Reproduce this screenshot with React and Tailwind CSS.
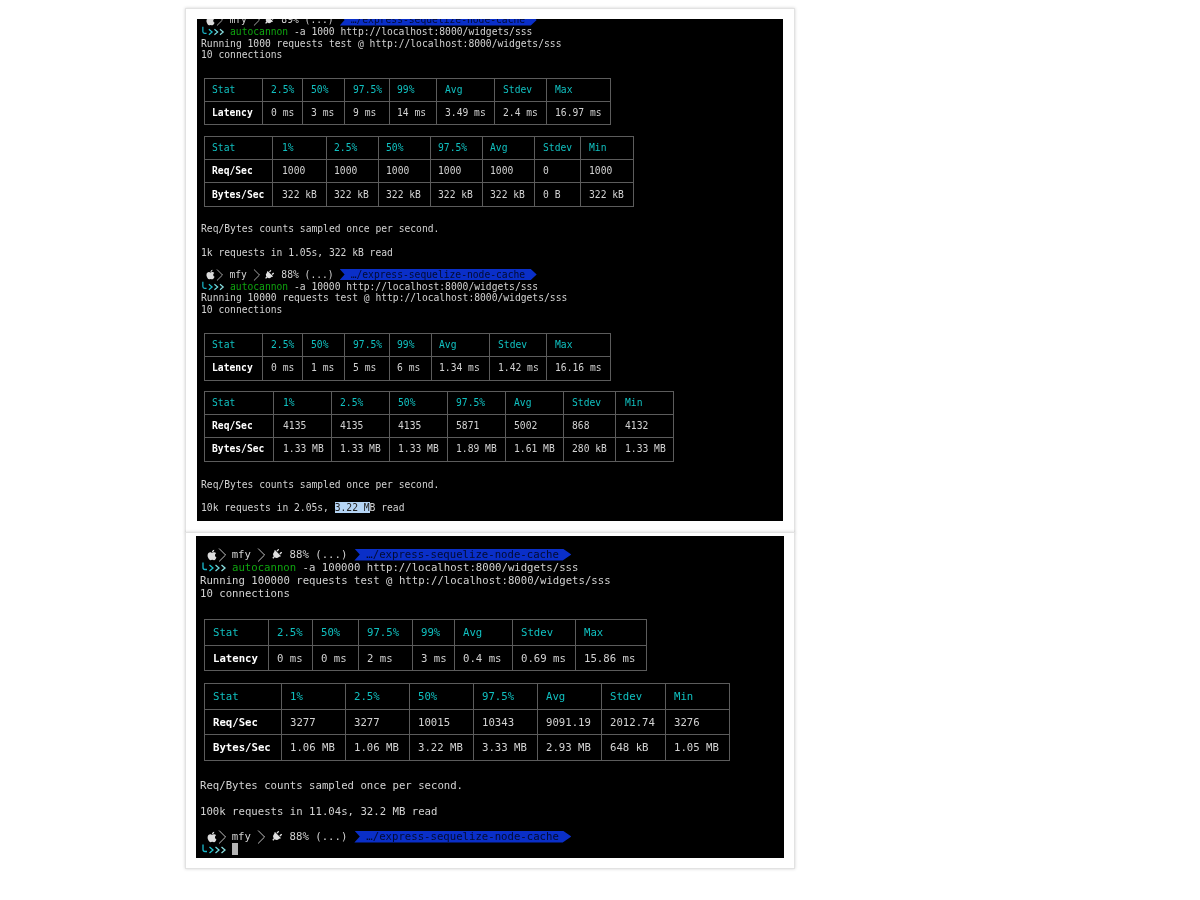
import React from "react";
import { FaApple, FaPlug } from "react-icons/fa";

const Chevron = ({ h }) => (
    <svg width={h * 0.62} height={h} viewBox="0 0 8 13" fill="none" stroke="#c8c8c8" strokeWidth="0.9" className="shrink-0">
        <path d="M1 0.5 L7 6.5 L1 12.5" />
    </svg>
);

const Arrows = ({ big }) => (
    <svg width={big ? 27 : 25} height="11" viewBox="0 0 27 11" fill="none" strokeWidth="1.3" className={big ? "ml-[5px] shrink-0" : "ml-[4px] shrink-0"}>
        <path d="M2 0.5 V5.5 Q2 7.5 4 7.5 H6" stroke="#19b8cc" />
        <path d="M8.5 3 L12 6 L8.5 9" stroke="#1fc4cf" />
        <path d="M14.5 3 L18 6 L14.5 9" stroke="#6fd6dc" />
        <path d="M20.5 3 L24 6 L20.5 9" stroke="#8adfe0" />
    </svg>
);

const Prompt = ({ big, battery }) => {
    const h = big ? 14 : 12;
    return (
        <div className={big ? "flex items-center h-[13px] pl-[10px]" : "flex items-center h-[12px] pl-[8px]"}>
            <FaApple className={big ? "text-[12px] text-[#dcdcdc] shrink-0" : "text-[11px] text-[#dcdcdc] shrink-0"} />
            <span className="ml-0"><Chevron h={h} /></span>
            <span className={big ? "ml-[5px]" : "ml-[6px]"}>mfy</span>
            <span className="ml-[6px]"><Chevron h={h} /></span>
            <FaPlug className={big ? "ml-[5px] text-[11px] text-[#e0e0e0] rotate-45 shrink-0" : "ml-[4px] text-[10px] text-[#e0e0e0] rotate-45 shrink-0"} />
            <span className={big ? "ml-[8px] whitespace-pre" : "ml-[7px] whitespace-pre"}>{battery}% (...)</span>
            <span
                className={
                    big
                        ? "ml-[7px] h-[12px] w-[217px] pl-[12px] flex items-center bg-[#0a2fc8] text-[#030b30] [clip-path:polygon(0_0,96%_0,100%_50%,96%_100%,0_100%,2.5%_50%)]"
                        : "ml-[6px] h-[11px] w-[197px] pl-[11px] flex items-center bg-[#0a2fc8] text-[#030b30] [clip-path:polygon(0_0,97%_0,100%_50%,97%_100%,0_100%,2.5%_50%)]"
                }
            >
                …/express-sequelize-node-cache
            </span>
        </div>
    );
};

const Command = ({ big, children }) => (
    <div className="flex items-center">
        <Arrows big={big} />
        <span className="ml-[4px] whitespace-pre text-[#0fa50f]">autocannon</span>
        <span className="whitespace-pre"> {children}</span>
    </div>
);

const Table = ({ widths, rows, rowH, pads, className }) => (
    <div className={"w-fit border-t border-l border-[#5c5c5c] " + className}>
        {rows.map((row, r) => (
            <div key={r} className="flex">
                {row.map((cell, c) => (
                    <div
                        key={c}
                        style={{ width: widths[c], height: rowH[r], paddingLeft: pads[c] }}
                        className={
                            "flex items-center whitespace-pre border-r border-b border-[#5c5c5c] " +
                            (r === 0 ? "text-[#10c0c0]" : c === 0 ? "font-bold text-white" : "")
                        }
                    >
                        {cell}
                    </div>
                ))}
            </div>
        ))}
    </div>
);

const App = () => {
    return (
        <div className="min-h-[900px] bg-white pt-2 font-['DejaVu_Sans_Mono',monospace]">
            <div className="ml-[185px] w-[610px] border border-[#e2e2e2] bg-white shadow-[0_0_3px_rgba(0,0,0,0.18)] pt-[10px] pl-[11px] pr-[11px] pb-[11px]">
                <div className="h-[502px] w-[586px] overflow-hidden bg-black text-[9.67px] leading-[11.72px] text-[#d2d2d2] blur-[0.3px]">
                    <div className="-mt-[5px]">
                        <Prompt battery={89} />
                    </div>
                    <Command>-a 1000 http://localhost:8000/widgets/sss</Command>
                    <div className="pl-[4px]">Running 1000 requests test @ http://localhost:8000/widgets/sss</div>
                    <div className="pl-[4px]">10 connections</div>
                    <Table
                        className="ml-[7px] mt-[17px]"
                        pads={[7, 8, 8, 8, 7, 8, 8, 8]}
                        widths={[58, 40, 42, 45, 47, 58, 52, 64]}
                        rowH={[23, 23]}
                        rows={[
                            ["Stat", "2.5%", "50%", "97.5%", "99%", "Avg", "Stdev", "Max"],
                            ["Latency", "0 ms", "3 ms", "9 ms", "14 ms", "3.49 ms", "2.4 ms", "16.97 ms"],
                        ]}
                    />
                    <Table
                        className="ml-[7px] mt-[11px]"
                        pads={[7, 9, 7, 7, 7, 7, 8, 8]}
                        widths={[68, 54, 52, 52, 52, 52, 46, 53]}
                        rowH={[23, 23, 24]}
                        rows={[
                            ["Stat", "1%", "2.5%", "50%", "97.5%", "Avg", "Stdev", "Min"],
                            ["Req/Sec", "1000", "1000", "1000", "1000", "1000", "0", "1000"],
                            ["Bytes/Sec", "322 kB", "322 kB", "322 kB", "322 kB", "322 kB", "0 B", "322 kB"],
                        ]}
                    />
                    <div className="pl-[4px] mt-[16px]">Req/Bytes counts sampled once per second.</div>
                    <div className="pl-[4px] mt-[12px]">1k requests in 1.05s, 322 kB read</div>
                    <div className="mt-[10px]">
                        <Prompt battery={88} />
                    </div>
                    <Command>-a 10000 http://localhost:8000/widgets/sss</Command>
                    <div className="pl-[4px]">Running 10000 requests test @ http://localhost:8000/widgets/sss</div>
                    <div className="pl-[4px]">10 connections</div>
                    <Table
                        className="ml-[7px] mt-[17px]"
                        pads={[7, 8, 8, 8, 7, 7, 8, 8]}
                        widths={[58, 40, 42, 45, 42, 58, 57, 64]}
                        rowH={[23, 24]}
                        rows={[
                            ["Stat", "2.5%", "50%", "97.5%", "99%", "Avg", "Stdev", "Max"],
                            ["Latency", "0 ms", "1 ms", "5 ms", "6 ms", "1.34 ms", "1.42 ms", "16.16 ms"],
                        ]}
                    />
                    <Table
                        className="ml-[7px] mt-[10px]"
                        pads={[7, 9, 8, 8, 8, 8, 8, 9]}
                        widths={[69, 58, 58, 58, 58, 58, 52, 58]}
                        rowH={[23, 23, 24]}
                        rows={[
                            ["Stat", "1%", "2.5%", "50%", "97.5%", "Avg", "Stdev", "Min"],
                            ["Req/Sec", "4135", "4135", "4135", "5871", "5002", "868", "4132"],
                            ["Bytes/Sec", "1.33 MB", "1.33 MB", "1.33 MB", "1.89 MB", "1.61 MB", "280 kB", "1.33 MB"],
                        ]}
                    />
                    <div className="pl-[4px] mt-[17px]">Req/Bytes counts sampled once per second.</div>
                    <div className="pl-[4px] mt-[12px] whitespace-pre">
                        10k requests in 2.05s, <span className="bg-[#b5d5f5] text-[#222]">3.22 M</span>B read
                    </div>
                </div>
            </div>
            <div className="-mt-[1px] ml-[185px] w-[610px] border border-[#e2e2e2] bg-white shadow-[0_0_3px_rgba(0,0,0,0.18)] pt-[3px] pl-[10px] pr-[10px] pb-[10px]">
                <div className="h-[322px] w-[588px] overflow-hidden bg-black pt-[12px] text-[10.66px] leading-[13px] text-[#d2d2d2] blur-[0.3px]">
                    <Prompt big battery={88} />
                    <Command big>-a 100000 http://localhost:8000/widgets/sss</Command>
                    <div className="pl-[4px]">Running 100000 requests test @ http://localhost:8000/widgets/sss</div>
                    <div className="pl-[4px]">10 connections</div>
                    <Table
                        className="ml-[8px] mt-[19px]"
                        pads={[8, 8, 8, 8, 8, 8, 8, 8]}
                        widths={[64, 44, 46, 54, 42, 58, 63, 71]}
                        rowH={[26, 25]}
                        rows={[
                            ["Stat", "2.5%", "50%", "97.5%", "99%", "Avg", "Stdev", "Max"],
                            ["Latency", "0 ms", "0 ms", "2 ms", "3 ms", "0.4 ms", "0.69 ms", "15.86 ms"],
                        ]}
                    />
                    <Table
                        className="ml-[8px] mt-[12px]"
                        pads={[8, 8, 8, 8, 8, 8, 8, 8]}
                        widths={[77, 64, 64, 64, 64, 64, 64, 64]}
                        rowH={[26, 25, 26]}
                        rows={[
                            ["Stat", "1%", "2.5%", "50%", "97.5%", "Avg", "Stdev", "Min"],
                            ["Req/Sec", "3277", "3277", "10015", "10343", "9091.19", "2012.74", "3276"],
                            ["Bytes/Sec", "1.06 MB", "1.06 MB", "3.22 MB", "3.33 MB", "2.93 MB", "648 kB", "1.05 MB"],
                        ]}
                    />
                    <div className="pl-[4px] mt-[18px]">Req/Bytes counts sampled once per second.</div>
                    <div className="pl-[4px] mt-[13px]">100k requests in 11.04s, 32.2 MB read</div>
                    <div className="mt-[12px]">
                        <Prompt big battery={88} />
                    </div>
                    <div className="flex items-center">
                        <Arrows big />
                        <span className="ml-[4px] h-[12px] w-[6px] bg-[#b4b4b4]"></span>
                    </div>
                </div>
            </div>
        </div>
    );
};

export default App;
